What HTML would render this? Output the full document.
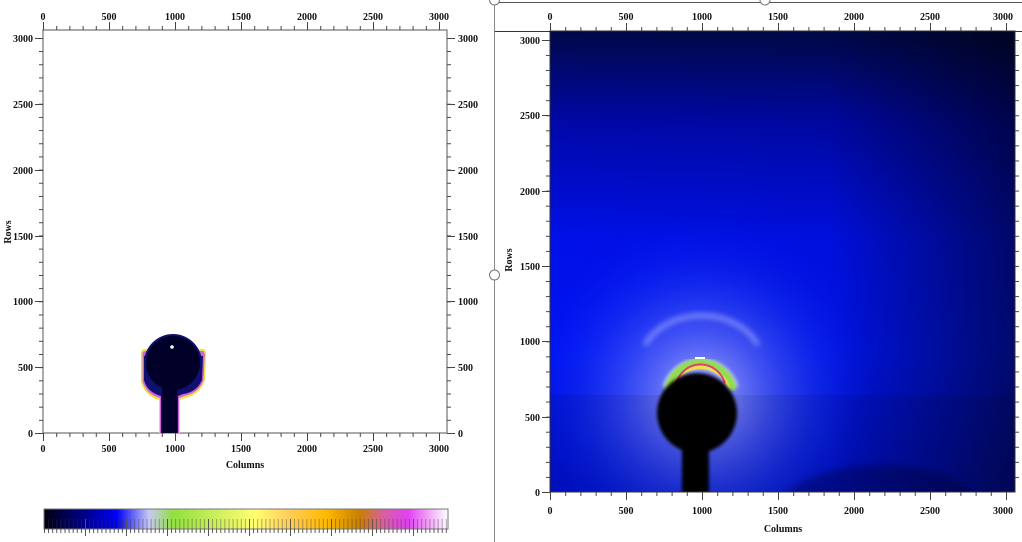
<!DOCTYPE html>
<html><head><meta charset="utf-8"><style>
html,body{margin:0;padding:0;background:#fff;width:1022px;height:542px;overflow:hidden}
svg{display:block}
text{font-family:"Liberation Serif",serif;font-size:10px;font-weight:bold;fill:#111}
</style></head><body>
<svg width="1022" height="542" viewBox="0 0 1022 542" xmlns="http://www.w3.org/2000/svg">
<defs>
<pattern id="lx" patternUnits="userSpaceOnUse" x="43" y="0" width="13.2" height="600"><line x1="0.5" y1="0" x2="0.5" y2="600" stroke="#444" stroke-width="1"/></pattern>
<pattern id="ly" patternUnits="userSpaceOnUse" x="0" y="433" width="600" height="13.17"><line x1="0" y1="0.5" x2="600" y2="0.5" stroke="#444" stroke-width="1"/></pattern>
<pattern id="rx" patternUnits="userSpaceOnUse" x="550" y="0" width="15.2" height="600"><line x1="0.5" y1="0" x2="0.5" y2="600" stroke="#444" stroke-width="1"/></pattern>
<pattern id="ry" patternUnits="userSpaceOnUse" x="0" y="492" width="600" height="15.07"><line x1="0" y1="0.5" x2="600" y2="0.5" stroke="#444" stroke-width="1"/></pattern>
<pattern id="cb" patternUnits="userSpaceOnUse" x="44" y="0" width="4.1" height="600"><line x1="0.5" y1="0" x2="0.5" y2="600" stroke="#333" stroke-width="0.8"/></pattern>
<linearGradient id="cbg" x1="0" x2="1" y1="0" y2="0">
<stop offset="0" stop-color="#000010"/><stop offset="0.1" stop-color="#00008a"/><stop offset="0.18" stop-color="#0000f5"/>
<stop offset="0.26" stop-color="#c8c8f5"/><stop offset="0.32" stop-color="#90e040"/><stop offset="0.44" stop-color="#d4f060"/>
<stop offset="0.52" stop-color="#ffff70"/><stop offset="0.6" stop-color="#ffd060"/><stop offset="0.7" stop-color="#ffb800"/>
<stop offset="0.78" stop-color="#c88000"/><stop offset="0.84" stop-color="#d860a0"/><stop offset="0.9" stop-color="#e040f0"/>
<stop offset="1" stop-color="#ffffff"/></linearGradient>
<linearGradient id="bgv" x1="0" x2="0" y1="0" y2="1">
<stop offset="0" stop-color="#000848"/><stop offset="0.2" stop-color="#0008a8"/><stop offset="0.45" stop-color="#0010e8"/><stop offset="0.7" stop-color="#0014f0"/><stop offset="1" stop-color="#0010c8"/></linearGradient>
<linearGradient id="bgh" x1="0" x2="1" y1="0" y2="0">
<stop offset="0" stop-color="#000000" stop-opacity="0"/><stop offset="0.6" stop-color="#000000" stop-opacity="0.05"/><stop offset="1" stop-color="#000000" stop-opacity="0.55"/></linearGradient>
<radialGradient id="halo" cx="702" cy="395" r="180" gradientUnits="userSpaceOnUse">
<stop offset="0" stop-color="#b0b4ff" stop-opacity="1"/><stop offset="0.35" stop-color="#6070ff" stop-opacity="0.7"/><stop offset="0.7" stop-color="#2040ff" stop-opacity="0.3"/><stop offset="1" stop-color="#0010ff" stop-opacity="0"/></radialGradient>
<filter id="bl" x="-20%" y="-20%" width="140%" height="140%"><feGaussianBlur stdDeviation="3"/></filter>
<filter id="bl1" x="-20%" y="-20%" width="140%" height="140%"><feGaussianBlur stdDeviation="1.5"/></filter>
<clipPath id="rc"><rect x="550" y="31" width="465" height="461"/></clipPath>
</defs>

<!-- LEFT PLOT -->
<rect x="43" y="30" width="404" height="403" fill="#fff" stroke="#555"/>
<rect x="43" y="26" width="396" height="4" fill="url(#lx)"/>
<rect x="43" y="433" width="396" height="4" fill="url(#lx)"/>
<rect x="39" y="38" width="4" height="395" fill="url(#ly)"/>
<rect x="447" y="38" width="4" height="395" fill="url(#ly)"/>
<g stroke="#444">
<path d="M43.5 22V30M175.5 22V30M307.5 22V30M439.5 22V30M43.5 433V441M175.5 433V441M307.5 433V441M439.5 433V441M109.5 22V30M241.5 22V30M373.5 22V30M109.5 433V441M241.5 433V441M373.5 433V441"/>
<path d="M35 38.5H43M35 104.5H43M35 170.5H43M35 236.5H43M35 301.5H43M35 367.5H43M35 433.5H43M447 38.5H455M447 104.5H455M447 170.5H455M447 236.5H455M447 301.5H455M447 367.5H455M447 433.5H455"/>
</g>
<g text-anchor="middle">
<text x="43" y="20">0</text><text x="109" y="20">500</text><text x="175" y="20">1000</text><text x="241" y="20">1500</text><text x="307" y="20">2000</text><text x="373" y="20">2500</text><text x="439" y="20">3000</text>
<text x="43" y="452">0</text><text x="109" y="452">500</text><text x="175" y="452">1000</text><text x="241" y="452">1500</text><text x="307" y="452">2000</text><text x="373" y="452">2500</text><text x="439" y="452">3000</text>
<text x="245" y="468">Columns</text>
</g>
<g text-anchor="end">
<text x="33" y="42">3000</text><text x="33" y="108">2500</text><text x="33" y="174">2000</text><text x="33" y="240">1500</text><text x="33" y="305">1000</text><text x="33" y="371">500</text><text x="33" y="437">0</text>
</g>
<g><text x="458" y="42">3000</text><text x="458" y="108">2500</text><text x="458" y="174">2000</text><text x="458" y="240">1500</text><text x="458" y="305">1000</text><text x="458" y="371">500</text><text x="458" y="437">0</text></g>
<text transform="translate(11,232) rotate(-90)" text-anchor="middle">Rows</text>
<!-- blob -->
<path d="M141 353 Q141 349 146 349 L204 349 Q207 351 206 358 L205 380 Q200 395 185 398 L180 400 L180 433 L159 433 L159 400 Q145 396 141 382 Z" fill="#f0e040"/>
<path d="M142.5 354 Q142.5 351 146 351 L203 351 Q205.5 353 204.5 359 L203.5 380 Q199 393 184 396 L179 398 L179 433 L160 433 L160 398 Q146 394 142.5 381 Z" fill="#d060e0"/>
<path d="M144 356 L203 356 L202 380 Q197 392 183 394 L178 396 L178 433 L161 433 L161 396 Q147 392 144 380 Z" fill="#101070"/>
<circle cx="173" cy="363" r="29" fill="#101070"/>
<circle cx="173" cy="363" r="27" fill="#000028"/>
<rect x="162" y="385" width="15" height="48" fill="#000028"/>
<circle cx="172" cy="347" r="1.8" fill="#fff"/>

<!-- colorbar -->
<rect x="44" y="509" width="404" height="20" fill="url(#cbg)" stroke="#777"/>
<rect x="44" y="519" width="403" height="10" fill="url(#cb)" opacity="0.5"/>
<rect x="44" y="529" width="403" height="4" fill="url(#cb)"/>
<g stroke="#555"><path d="M85.5 519V536M126.5 519V536M167.5 519V536M208.5 519V536M249.5 519V536M290.5 519V536M331.5 519V536M372.5 519V536M413.5 519V536"/></g>

<!-- RIGHT SIDE frame -->
<line x1="494.5" y1="0" x2="494.5" y2="542" stroke="#888"/>
<line x1="495" y1="31.5" x2="1022" y2="31.5" stroke="#333"/>
<line x1="494" y1="2.5" x2="1022" y2="2.5" stroke="#555"/>
<circle cx="494.5" cy="0" r="5" fill="#fff" stroke="#777"/>
<circle cx="765" cy="0" r="5" fill="#fff" stroke="#777"/>
<circle cx="494.5" cy="275" r="5" fill="#fff" stroke="#777"/>

<!-- RIGHT IMAGE -->
<g clip-path="url(#rc)">
<rect x="550" y="31" width="465" height="461" fill="url(#bgv)"/>
<rect x="550" y="31" width="465" height="461" fill="url(#halo)"/>
<rect x="550" y="395" width="465" height="97" fill="#000" opacity="0.08"/>
<rect x="550" y="31" width="465" height="461" fill="url(#bgh)"/>
<ellipse cx="880" cy="510" rx="100" ry="45" fill="#000020" opacity="0.3" filter="url(#bl)"/>
<path d="M645 345 A62 50 0 0 1 758 345" fill="none" stroke="#c8ccff" stroke-width="5" opacity="0.5" filter="url(#bl)"/>
<path d="M668 388 A34 34 0 0 1 733 388" fill="none" stroke="#e0e8ff" stroke-width="12" opacity="0.6" filter="url(#bl1)"/>
<path d="M668 390 A33 33 0 0 1 733 390" fill="none" stroke="#90e040" stroke-width="7" filter="url(#bl1)"/>
<path d="M672 388 A30 30 0 0 1 729 388" fill="none" stroke="#f0e050" stroke-width="3"/>
<path d="M676 383 A26 28 0 0 1 725 383" fill="none" stroke="#e04070" stroke-width="2"/>
<rect x="695" y="357" width="10" height="2" fill="#fff"/>
<g filter="url(#bl1)">
<circle cx="697" cy="413" r="40" fill="#000"/>
<rect x="682" y="420" width="27" height="80" fill="#000"/>
</g>
</g>
<rect x="550" y="31" width="465" height="461" fill="none" stroke="#333"/>
<rect x="550" y="27" width="461" height="4" fill="url(#rx)"/>
<rect x="550" y="492" width="461" height="4" fill="url(#rx)"/>
<rect x="546" y="40" width="4" height="452" fill="url(#ry)"/>
<rect x="1015" y="40" width="4" height="452" fill="url(#ry)"/>
<g stroke="#444">
<path d="M550.5 23V31M626.5 23V31M702.5 23V31M778.5 23V31M854.5 23V31M930.5 23V31M1006.5 23V31M550.5 492V500M626.5 492V500M702.5 492V500M778.5 492V500M854.5 492V500M930.5 492V500M1006.5 492V500"/>
<path d="M542 40.5H550M542 115.5H550M542 191.5H550M542 266.5H550M542 341.5H550M542 417.5H550M542 492.5H550"/>
</g>
<g text-anchor="middle">
<text x="550" y="20">0</text><text x="626" y="20">500</text><text x="702" y="20">1000</text><text x="778" y="20">1500</text><text x="854" y="20">2000</text><text x="930" y="20">2500</text><text x="1003" y="20">3000</text>
<text x="550" y="514">0</text><text x="626" y="514">500</text><text x="702" y="514">1000</text><text x="778" y="514">1500</text><text x="854" y="514">2000</text><text x="930" y="514">2500</text><text x="1003" y="514">3000</text>
<text x="783" y="532">Columns</text>
</g>
<g text-anchor="end">
<text x="540" y="44">3000</text><text x="540" y="119">2500</text><text x="540" y="195">2000</text><text x="540" y="270">1500</text><text x="540" y="345">1000</text><text x="540" y="421">500</text><text x="540" y="496">0</text>
</g>
<text transform="translate(512,260) rotate(-90)" text-anchor="middle">Rows</text>
</svg>
</body></html>
